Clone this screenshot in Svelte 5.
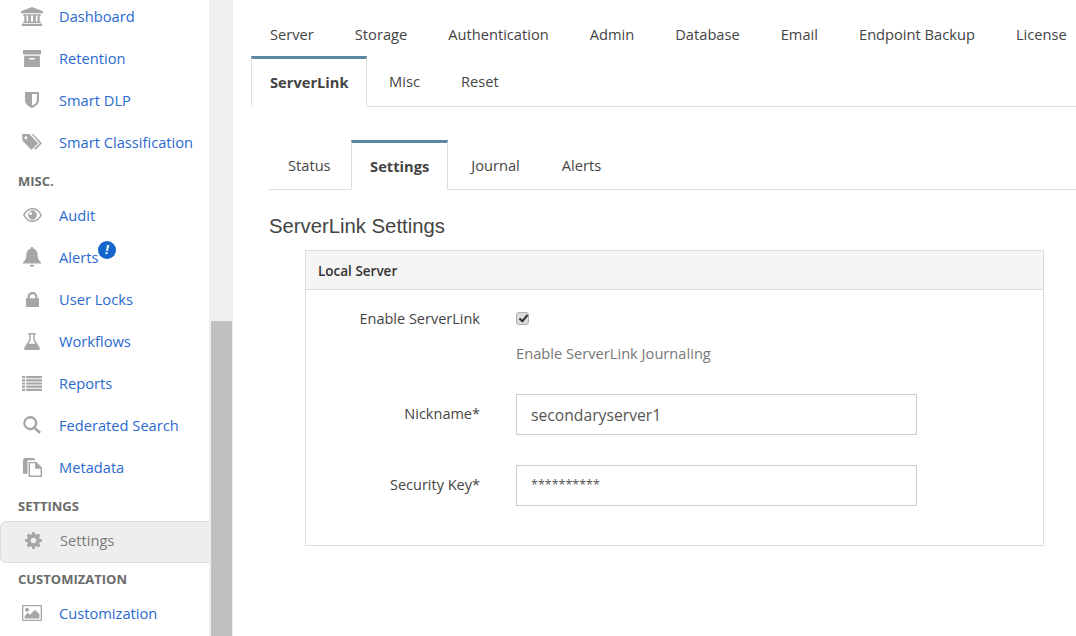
<script>
  // vb = path bounds, w/h = drawn size in px
  const icons = {
    bank: { w: 22, h: 19, vb: '0 0 16 15', d: 'M8 0 L16 3.4 V5 H0 V3.4 Z M1.5 5.8 H14.5 V6.8 H13.6 V11.6 H14.5 V12.6 H1.5 V11.6 H2.4 V6.8 H1.5 Z M4 6.8 V11.6 H5.2 V6.8 Z M7.2 6.8 V11.6 H8.8 V6.8 Z M10.8 6.8 V11.6 H12 V6.8 Z M0.6 13.2 H15.4 V15 H0.6 Z' },
    archive: { w: 18, h: 17, vb: '0 0 16 15', d: 'M0 0 H16 V4 H0 Z M1 5 H15 V15 H1 Z M5.5 7 V8.4 H10.5 V7 Z' },
    shield: { w: 14, h: 16, vb: '1.5 0.5 11 14.5', d: 'M1.5 0.5 H12.5 V8 C12.5 11.5 9.5 13.8 7 15 C4.5 13.8 1.5 11.5 1.5 8 Z M7 2.2 V13 C9 12 10.8 10.2 10.8 8 V2.2 Z' },
    tags: { w: 20, h: 16, vb: '0 1 18 14', d: 'M0 1 H6.5 L14.5 9 L8.5 15 L0.5 7 Z M3.5 3 A1.3 1.3 0 1 0 3.51 3 Z M8.5 1 H10 L18 9 L12 15 L11 14 L16 9 Z' },
    eye: { w: 19, h: 14, vb: '0 0 19 13', d: 'M0 6.5 C2.5 2.2 5.5 0 9.5 0 C13.5 0 16.5 2.2 19 6.5 C16.5 10.8 13.5 13 9.5 13 C5.5 13 2.5 10.8 0 6.5 Z M1.6 6.5 C3.6 9.8 6 11.6 9.5 11.6 C13 11.6 15.4 9.8 17.4 6.5 C15.4 3.2 13 1.4 9.5 1.4 C6 1.4 3.6 3.2 1.6 6.5 Z M9.5 2.2 A4.3 4.3 0 1 1 9.49 2.2 Z M7.6 3.6 A1.4 1.4 0 1 0 7.61 3.6 Z' },
    bell: { w: 18, h: 20, vb: '0 0 16 17', d: 'M8 0 A1.2 1.2 0 0 1 9.2 1.3 C12 2 13 4.2 13 7 C13 10 14.2 11.5 16 13 V14 H0 V13 C1.8 11.5 3 10 3 7 C3 4.2 4 2 6.8 1.3 A1.2 1.2 0 0 1 8 0 Z M6 15 H10 A2 2 0 0 1 6 15 Z' },
    lock: { w: 13, h: 15, vb: '0.5 0.2 12 13.8', d: 'M2 6 V4.8 C2 2 4 0.2 6.5 0.2 C9 0.2 11 2 11 4.8 V6 H12.5 V14 H0.5 V6 Z M4 6 H9 V4.8 C9 3.2 8 2.2 6.5 2.2 C5 2.2 4 3.2 4 4.8 Z' },
    flask: { w: 16, h: 17, vb: '0.3 0 15.4 15.5', d: 'M4.5 0 H11.5 V1.4 H10.6 V6 L15.4 13.4 C16 14.5 15.4 15.5 14.2 15.5 H1.8 C0.6 15.5 0 14.5 0.6 13.4 L5.4 6 V1.4 H4.5 Z M6.8 1.4 V6.4 L4.6 9.8 H11.4 L9.2 6.4 V1.4 Z' },
    list: { w: 20, h: 15, vb: '0 0 19 15', d: 'M0 0 H3 V2.2 H0 Z M4 0 H19 V2.2 H4 Z M0 3.2 H3 V5.4 H0 Z M4 3.2 H19 V5.4 H4 Z M0 6.4 H3 V8.6 H0 Z M4 6.4 H19 V8.6 H4 Z M0 9.6 H3 V11.8 H0 Z M4 9.6 H19 V11.8 H4 Z M0 12.8 H3 V15 H0 Z M4 12.8 H19 V15 H4 Z' },
    search: { w: 18, h: 18, vb: '0 0 17.6 17.6', d: 'M7 0 A7 7 0 0 1 12.6 11.2 L17.6 15.4 L15.8 17.6 L10.9 13 A7 7 0 1 1 7 0 Z M7 2.4 A4.6 4.6 0 1 0 7.01 2.4 Z' },
    files: { w: 19, h: 19, vb: '0 0 17 17', d: 'M1.5 0 H10 L11 2 H4 V14 H0 V1.5 Z M5 3.5 H12 L17 8.5 V17 H5 Z M6.3 4.8 V15.7 H15.7 V9.7 H10.8 V4.8 Z' },
    gear: { w: 17, h: 17, vb: '0 0 18 18', d: 'M7.8 0 H10.2 L10.7 2.3 L12.3 3 L14.3 1.7 L16.3 3.7 L15 5.7 L15.7 7.3 L18 7.8 V10.2 L15.7 10.7 L15 12.3 L16.3 14.3 L14.3 16.3 L12.3 15 L10.7 15.7 L10.2 18 H7.8 L7.3 15.7 L5.7 15 L3.7 16.3 L1.7 14.3 L3 12.3 L2.3 10.7 L0 10.2 V7.8 L2.3 7.3 L3 5.7 L1.7 3.7 L3.7 1.7 L5.7 3 L7.3 2.3 Z M9 6 A3 3 0 1 0 9.01 6 Z' },
    image: { w: 20, h: 16, vb: '0 0 20 16', d: 'M1 0 H19 A1 1 0 0 1 20 1 V15 A1 1 0 0 1 19 16 H1 A1 1 0 0 1 0 15 V1 A1 1 0 0 1 1 0 Z M1.3 1.3 V14.7 H18.7 V1.3 Z M5 2.8 A2 2 0 1 0 5.01 2.8 Z M2.6 13.4 V11 L6 7.8 L8 9.8 L13 4.8 L17.4 9.2 V13.4 Z' }
  };

  const sidebar = [
    { label: 'Dashboard', icon: 'bank' },
    { label: 'Retention', icon: 'archive' },
    { label: 'Smart DLP', icon: 'shield' },
    { label: 'Smart Classification', icon: 'tags' },
    { heading: 'MISC.' },
    { label: 'Audit', icon: 'eye' },
    { label: 'Alerts', icon: 'bell', badge: true },
    { label: 'User Locks', icon: 'lock' },
    { label: 'Workflows', icon: 'flask' },
    { label: 'Reports', icon: 'list' },
    { label: 'Federated Search', icon: 'search' },
    { label: 'Metadata', icon: 'files' },
    { heading: 'SETTINGS', tall: true },
    { label: 'Settings', icon: 'gear', active: true },
    { heading: 'CUSTOMIZATION', short: true },
    { label: 'Customization', icon: 'image' }
  ];

  const topTabs = ['Server', 'Storage', 'Authentication', 'Admin', 'Database', 'Email', 'Endpoint Backup', 'License', 'ServerLink', 'Misc', 'Reset'];
  const subTabs = ['Status', 'Settings', 'Journal', 'Alerts'];

  let enabled = $state(true);
  let nickname = $state('secondaryserver1');
  let securityKey = $state('**********');
</script>

<div class="page">
  <nav class="sidebar">
    {#each sidebar as item}
      {#if item.heading}
        <div class="section" class:tall={item.tall} class:short={item.short}>{item.heading}</div>
      {:else}
        <a href="#top" class="item" class:active={item.active}>
          <span class="icon">
            <svg width={icons[item.icon].w} height={icons[item.icon].h} viewBox={icons[item.icon].vb} preserveAspectRatio="none">
              <path d={icons[item.icon].d} fill-rule="evenodd" />
            </svg>
          </span>
          <span>{item.label}</span>
          {#if item.badge}<span class="badge">!</span>{/if}
        </a>
      {/if}
    {/each}
  </nav>

  <div class="gutter"><div class="thumb"></div></div>

  <main>
    <div class="top-wrap">
      <ul class="tabs top">
        {#each topTabs as tab}
          <li class:current={tab === 'ServerLink'}>{tab}</li>
        {/each}
      </ul>
    </div>

    <ul class="tabs sub">
      {#each subTabs as tab}
        <li class:current={tab === 'Settings'}>{tab}</li>
      {/each}
    </ul>

    <h2>ServerLink Settings</h2>

    <section class="panel">
      <header>Local Server</header>
      <div class="body">
        <div class="row check">
          <label for="enable">Enable ServerLink</label>
          <input id="enable" type="checkbox" bind:checked={enabled} />
        </div>
        <div class="row hint">
          <span></span>
          <span>Enable ServerLink Journaling</span>
        </div>
        <div class="row field">
          <label for="nick">Nickname*</label>
          <input id="nick" type="text" bind:value={nickname} />
        </div>
        <div class="row field">
          <label for="key">Security Key*</label>
          <input id="key" class="secret" type="text" bind:value={securityKey} />
        </div>
      </div>
    </section>
  </main>
</div>

<style>
  :global(body) {
    margin: 0;
    background: #fff;
  }

  .page {
    display: flex;
    height: 636px;
    overflow: hidden;
    font-family: 'Open Sans', sans-serif;
    font-size: 14.67px;
    color: #444;
  }

  .sidebar {
    width: 209px;
    flex: none;
    margin-top: -5px;
    display: flex;
    flex-direction: column;
  }

  .item {
    display: flex;
    align-items: center;
    height: 42px;
    flex: none;
    color: #2a6ad0;
    text-decoration: none;
    box-sizing: border-box;
    position: relative;
  }

  .icon {
    width: 44px;
    margin: 0 5px 0 10px;
    flex: none;
    display: flex;
    justify-content: center;
  }

  .icon svg {
    display: block;
    fill: #a6a6a6;
  }

  .item.active {
    color: #7a7a7a;
    background: #eee;
    border: 1px solid #ddd;
    border-right: none;
    border-radius: 6px 0 0 6px;
    padding-bottom: 4px;
  }

  .section {
    height: 31px;
    flex: none;
    padding: 10px 0 0 18px;
    box-sizing: border-box;
    font-size: 13px;
    font-weight: 700;
    color: #6b6b6b;
    line-height: 16px;
  }

  .section.tall {
    height: 33px;
  }

  .section.short {
    height: 29px;
    padding-top: 8px;
  }

  .badge {
    position: absolute;
    left: 98px;
    top: 5px;
    width: 18px;
    height: 18px;
    border-radius: 50%;
    background: #1466cc;
    color: #fff;
    font-size: 12px;
    font-weight: 700;
    font-style: italic;
    line-height: 18px;
    text-align: center;
  }

  .gutter {
    width: 24px;
    flex: none;
    background: #f0f0f0;
    padding-left: 2px;
    box-sizing: border-box;
    display: flex;
    flex-direction: column;
    justify-content: flex-end;
  }

  .thumb {
    width: 21px;
    height: 315px;
    background: #c0c0c0;
  }

  main {
    flex: 1;
    min-width: 0;
    padding: 9px 0 0 18px;
  }

  .top-wrap {
    border-bottom: 1px solid #ddd;
  }

  .tabs {
    list-style: none;
    margin: 0;
    padding: 0;
    display: flex;
    flex-wrap: wrap;
  }

  /* the tab strip runs past the right edge of the window, as in the real page */
  .tabs.top {
    width: 840px;
  }

  .tabs.sub {
    margin: 33px 0 0 18px;
    border-bottom: 1px solid #ddd;
  }

  .tabs li {
    padding: 15px 19px 0;
    margin: 0 3px -1px 0;
    box-sizing: border-box;
    height: 48px;
    line-height: 20px;
  }

  .tabs.sub li {
    margin-right: 4px;
  }

  .tabs.sub li:first-child {
    margin-right: 1px;
  }

  .tabs li.current {
    font-weight: 700;
    background: #fff;
    border: 1px solid #ddd;
    border-top: 3px solid #5b87a0;
    border-bottom-color: #fff;
    height: 51px;
    padding: 13px 17.5px 0 18px;
  }

  .tabs.sub li.current {
    height: 50px;
    padding: 13px 18px 0 18.5px;
  }

  h2 {
    font-family: 'Liberation Sans', Arial, sans-serif;
    font-size: 20.3px;
    font-weight: 400;
    color: #444;
    margin: 24px 0 0 18px;
    line-height: 24px;
  }

  .panel {
    margin: 12px 0 0 54px;
    width: 739px;
    height: 296px;
    box-sizing: border-box;
    border: 1px solid #ddd;
  }

  .panel header {
    height: 38px;
    background: #f5f5f5;
    border-bottom: 1px solid #ddd;
    padding: 0 12px;
    line-height: 40px;
    font-size: 13.5px;
    font-weight: 600;
    color: #333;
  }

  .row {
    display: grid;
    grid-template-columns: 174px 401px;
    column-gap: 36px;
    align-items: center;
    font-size: 14.5px;
  }

  .row label {
    text-align: right;
  }

  .row.field label {
    margin-bottom: 2px;
  }

  .row.check {
    margin-top: 18px;
    height: 20px;
  }

  .row.hint {
    margin-top: 15px;
    height: 20px;
    color: #777;
    font-size: 14.67px;
  }

  .row.field {
    margin-top: 30px;
    height: 41px;
  }

  .row.hint + .row.field {
    margin-top: 31px;
  }

  .row input[type='text'] {
    box-sizing: border-box;
    width: 401px;
    height: 41px;
    border: 1px solid #ccc;
    padding: 1px 14px 0;
    font: inherit;
    font-size: 15.7px;
    color: #555;
    outline: none;
  }

  .row input.secret {
    font-size: 12.5px;
    padding: 0 14px 2px;
  }

  .row input[type='checkbox'] {
    appearance: none;
    margin: 0;
    width: 13px;
    height: 13px;
    border-radius: 3px;
    border: 1px solid #b0b0b0;
    background: #dcdcdc;
    position: relative;
  }

  .row input[type='checkbox']:checked::after {
    content: '';
    position: absolute;
    left: 3.5px;
    top: 0;
    width: 3px;
    height: 7px;
    border: solid #333;
    border-width: 0 2.5px 2.5px 0;
    transform: rotate(40deg);
  }
</style>
